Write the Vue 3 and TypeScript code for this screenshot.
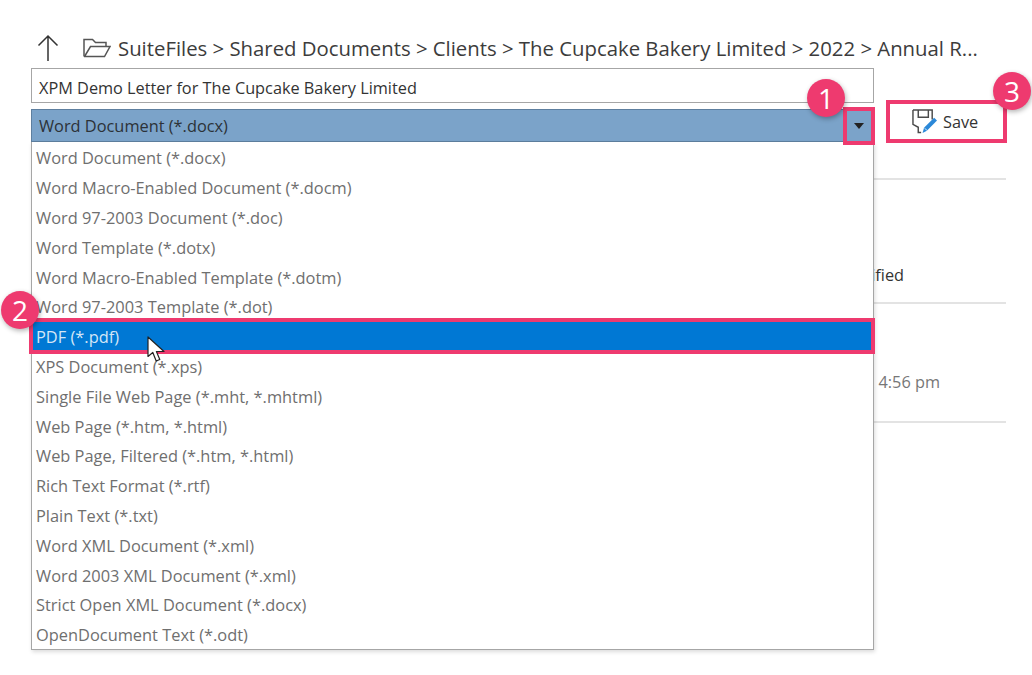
<script setup lang="ts">
const crumbs = "SuiteFiles > Shared Documents > Clients > The Cupcake Bakery Limited > 2022 > Annual R...";
const types: string[] = [
  "Word Document (*.docx)",
  "Word Macro-Enabled Document (*.docm)",
  "Word 97-2003 Document (*.doc)",
  "Word Template (*.dotx)",
  "Word Macro-Enabled Template (*.dotm)",
  "Word 97-2003 Template (*.dot)",
  "PDF (*.pdf)",
  "XPS Document (*.xps)",
  "Single File Web Page (*.mht, *.mhtml)",
  "Web Page (*.htm, *.html)",
  "Web Page, Filtered (*.htm, *.html)",
  "Rich Text Format (*.rtf)",
  "Plain Text (*.txt)",
  "Word XML Document (*.xml)",
  "Word 2003 XML Document (*.xml)",
  "Strict Open XML Document (*.docx)",
  "OpenDocument Text (*.odt)",
];
</script>

<template>
  <div class="page">
    <div class="path">
      <svg class="up" width="22" height="28" viewBox="0 0 22 28" fill="none" stroke="#333" stroke-width="1.5">
        <path d="M11 27V2M1.500 11.500 11 2l9.500 9.500" />
      </svg>
      <svg class="folder" width="28" height="20" viewBox="0 0 28 20" fill="none" stroke="#555" stroke-width="1.5">
        <path d="M1 18.500V1.500h8.500l3 3H23v4" />
        <path d="M1 18.500h20.500L27 8.500H7.500L1.500 18.500" />
      </svg>
      <span class="crumbs">{{ crumbs }}</span>
    </div>

    <div class="form">
      <div class="left">
        <div class="name">XPM Demo Letter for The Cupcake Bakery Limited</div>
        <div class="select">
          <span>Word Document (*.docx)</span>
          <span class="caret"></span>
        </div>
        <ul class="list">
          <li v-for="t in types" :key="t" :class="{ sel: t.startsWith('PDF') }">{{ t }}</li>
        </ul>
        <span class="mark mark-caret"></span>
        <span class="mark mark-pdf"></span>
      </div>

      <div class="right">
        <div class="save">
          <svg width="25" height="25" viewBox="0 0 26 26" fill="none">
            <path d="M1 1h20v10M1 1v15l5.500 3v5.500h3M6.500 1v7.500H17V1" stroke="#4a4a4a" stroke-width="1.500" />
            <path d="M11 25l1.500-5.500L23 9l3 3-10.500 10.500z" fill="#2b88d8" />
            <path d="M13 20l3 2.500" stroke="#fff" stroke-width="0.800" />
          </svg>
          <span>Save</span>
        </div>
        <div class="rows">
          <div class="row r1"><span class="dark">Modified</span></div>
          <div class="row r2"><span class="grey">12/04/2022 4:56 pm</span></div>
        </div>
      </div>
    </div>

    <svg class="cursor" width="19" height="27" viewBox="0 0 19 27">
      <path d="M1 1v19.500L5.800 16.500l3.400 8.500 3.600-1.500-3.400-8h7.600z" fill="#fff" stroke="#222" stroke-width="1.200" stroke-linejoin="round" />
    </svg>

    <span class="badge b1">1</span>
    <span class="badge b2">2</span>
    <span class="badge b3">3</span>
  </div>
</template>

<style>
html, body { background: #fff; }
</style>

<style scoped>
.page {
  position: relative;
  width: 1032px;
  height: 675px;
  overflow: hidden;
  background: #fff;
  font-family: "Open Sans", "Noto Sans", sans-serif;
  color: #333;
}
.path {
  height: 68px;
  box-sizing: border-box;
  padding: 34px 0 0 37px;
  display: flex;
  align-items: flex-start;
  white-space: nowrap;
}
.up { margin-right: 24px; }
.folder { margin-top: 4px; margin-right: 7px; }
.crumbs {
  font-size: 20.340px;
  line-height: 33px;
  margin-top: -2px;
  color: #3c3c3c;
}
.form {
  display: flex;
  padding-left: 31px;
}
.left {
  position: relative;
  width: 843px;
  flex: none;
}
.name {
  height: 35px;
  box-sizing: border-box;
  border: 1px solid #a6a6a6;
  padding-left: 7px;
  font-size: 16.300px;
  line-height: 38px;
  color: #333;
}
.select {
  margin-top: 6px;
  height: 33px;
  box-sizing: border-box;
  background: #7ba3c9;
  border: 1px solid #5e7f9f;
  border-width: 1px 0 1px 1px;
  padding-left: 7px;
  display: flex;
  align-items: center;
  justify-content: space-between;
  font-size: 16.350px;
  color: #2c3238;
}
.caret {
  width: 0;
  height: 0;
  margin-right: 10px;
  border: 5.500px solid transparent;
  border-top: 6px solid #222;
  border-bottom: 0;
}
.list {
  position: absolute;
  left: 0;
  top: 74px;
  width: 843px;
  height: 508px;
  box-sizing: border-box;
  margin: 0;
  padding: 1.400px 0 0;
  list-style: none;
  background: #fff;
  border: 1px solid #a6a6a6;
  border-top: 0;
  box-shadow: 1px 2px 4px rgba(0, 0, 0, 0.14);
  z-index: 1;
}
.list li {
  height: 29.800px;
  line-height: 29.800px;
  padding-left: 4px;
  font-size: 16.400px;
  color: #6f6f6f;
  white-space: nowrap;
}
.list li.sel {
  background: #0078d4;
  color: #d4e6f6;
}
.mark {
  position: absolute;
  border: 4px solid #ee3a6f;
  box-sizing: border-box;
  z-index: 2;
}
.mark-caret {
  left: 812px;
  top: 39px;
  width: 32px;
  height: 38px;
}
.mark-pdf {
  left: -2px;
  top: 250px;
  width: 846px;
  height: 36px;
}
.right {
  flex: none;
  width: 132px;
  position: relative;
}
.save {
  position: relative;
  margin-left: 12px;
  margin-top: 32px;
  width: 121px;
  height: 43px;
  box-sizing: border-box;
  border: 4px solid #ee3a6f;
  padding-left: 22px;
  display: flex;
  align-items: center;
  gap: 6px;
  font-size: 16.300px;
  color: #333;
  background: #fff;
}
.rows {
  margin-top: 35px;
  width: 132px;
}
.row {
  border-top: 2px solid #e3e3e3;
  display: flex;
  justify-content: flex-end;
  align-items: flex-start;
  white-space: nowrap;
  box-sizing: border-box;
}
.row span { flex: none; font-size: 16.300px; }
.r1 { height: 124px; padding: 84px 102px 0 0; }
.r2 { height: 121px; padding: 67px 66px 0 0; border-bottom: 2px solid #e3e3e3; }
.dark { color: #333; }
.grey { color: #777; }
.cursor {
  position: absolute;
  left: 147px;
  top: 336px;
  z-index: 3;
}
.badge {
  position: absolute;
  width: 38px;
  height: 38px;
  border-radius: 50%;
  background: #ee3a6f;
  color: #fff;
  font-size: 28px;
  line-height: 38px;
  text-align: center;
  box-shadow: 1px 2px 5px rgba(0, 0, 0, 0.3);
  z-index: 4;
}
.b1 { left: 807px; top: 79px; }
.b2 { left: 1px; top: 291px; }
.b3 { left: 993px; top: 72px; }
</style>
